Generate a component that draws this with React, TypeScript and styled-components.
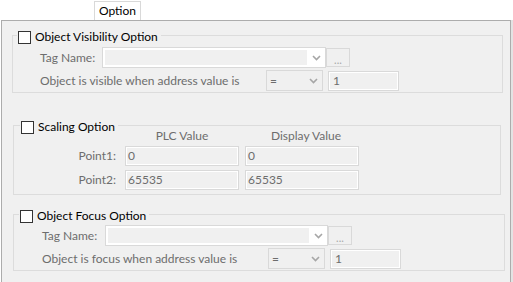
import React from 'react'
import styled, { createGlobalStyle } from 'styled-components'

const GlobalStyle = createGlobalStyle`
  html, body {
    margin: 0;
    padding: 0;
    background: #ffffff;
  }
  body {
    font-family: Lato, Roboto, "Liberation Sans", Arial, sans-serif;
    font-size: 12px;
    color: #000000;
  }
`

const Screen = styled.div`
  width: 513px;
  height: 282px;
  overflow: hidden;
  box-sizing: border-box;
  padding-left: 1px;
  background: #ffffff;
`

const TabStrip = styled.div`
  height: 20px;
  display: flex;
  align-items: flex-end;
  padding-left: 93px;
`

const Tab = styled.div`
  width: 47px;
  height: 19px;
  box-sizing: border-box;
  border: 1px solid #d9d9d9;
  border-bottom: none;
  background: #ffffff;
  display: flex;
  align-items: center;
  justify-content: center;
  line-height: 16px;
`

const Panel = styled.div`
  width: 510px;
  height: 262px;
  box-sizing: border-box;
  border: 1px solid #acacac;
  border-bottom: none;
  background: #f0f0f0;
  box-shadow: 2px 0 0 #e3e3e3;
  display: flow-root;
`

const Group = styled.fieldset<{ $left: number; $width: number; $top: number }>`
  margin: ${({ $top }) => $top}px 0 0 ${({ $left }) => $left}px;
  width: ${({ $width }) => $width}px;
  box-sizing: border-box;
  min-width: 0;
  padding: 0;
  border: 1px solid #dcdcdc;
`

const Legend = styled.legend<{ $offset: number }>`
  margin-left: ${({ $offset }) => $offset}px;
  padding: 4px 3px 0 1px;
  height: 20px;
  box-sizing: border-box;
`

const LegendInner = styled.span`
  display: inline-flex;
  align-items: center;
  gap: 4px;
  height: 16px;
  line-height: 16px;
  color: #000000;
  vertical-align: top;
`

const CheckBox = styled.span`
  width: 13px;
  height: 13px;
  box-sizing: border-box;
  border: 1px solid #333333;
  background: #ffffff;
`

const FieldRow = styled.div<{ $top: number; $indent: number }>`
  display: flex;
  align-items: center;
  margin-top: ${({ $top }) => $top}px;
  padding-left: ${({ $indent }) => $indent}px;
  height: 21px;
`

const Label = styled.span<{ $width: number }>`
  width: ${({ $width }) => $width}px;
  flex: none;
  color: #6d6d6d;
  white-space: nowrap;
`

const TagCombo = styled.div<{ $width: number }>`
  width: ${({ $width }) => $width}px;
  height: 21px;
  box-sizing: border-box;
  border: 1px solid #d9d9d9;
  background: #ffffff;
  padding: 2px 0 2px 2px;
  display: flex;
`

const TagEdit = styled.div`
  flex: 1;
  background: #f0f0f0;
`

const Arrow = styled.span`
  width: 18px;
  flex: none;
  display: flex;
  align-items: center;
  justify-content: center;
`

const ValueCombo = styled.div`
  width: 57px;
  height: 21px;
  box-sizing: border-box;
  border: 1px solid #d9d9d9;
  background: #f0f0f0;
  display: flex;
  align-items: center;
  padding-left: 3px;
  color: #6d6d6d;
`

const ComboText = styled.span`
  flex: 1;
`

const BrowseButton = styled.div`
  width: 24px;
  height: 19px;
  box-sizing: border-box;
  border: 1px solid #d9d9d9;
  background: #f0f0f0;
  color: #a8a8a8;
  font-size: 11px;
  display: flex;
  align-items: center;
  justify-content: center;
  padding-top: 3px;
`

const TextBox = styled.div<{ $width?: number; $pad: number; $gap?: number }>`
  width: ${({ $width }) => ($width ? `${$width}px` : 'auto')};
  height: 20px;
  margin-left: ${({ $gap }) => $gap ?? 0}px;
  box-sizing: border-box;
  border: 1px solid #d9d9d9;
  box-shadow: inset 0 0 0 1px #ffffff;
  background: #f0f0f0;
  color: #6d6d6d;
  line-height: 18px;
  padding-left: ${({ $pad }) => $pad}px;
`

const ScaleGrid = styled.div`
  display: grid;
  grid-template-columns: 105px 114px 114px;
  grid-template-rows: 13px 20px 20px;
  column-gap: 6px;
  row-gap: 4px;
  margin-top: -6px;
  padding-bottom: 4px;
`

const ColumnHead = styled.span<{ $shift: number }>`
  color: #6d6d6d;
  text-align: center;
  line-height: 13px;
  padding-left: ${({ $shift }) => $shift}px;
`

const PointLabel = styled.span`
  color: #6d6d6d;
  text-align: right;
  padding-right: 3px;
  line-height: 20px;
`

function Chevron() {
  return (
    <svg width="9" height="6" viewBox="0 0 9 6">
      <polyline points="1,1 4.5,4.5 8,1" fill="none" stroke="#a6a6a6" strokeWidth="1.6" />
    </svg>
  )
}

type OptionProps = {
  title: string
  condition: string
  left: number
  width: number
  top: number
  offset: number
  indent: number
  tagLabel: number
  combo: number
  firstTop: number
}

function AddressOption(p: OptionProps) {
  return (
    <Group $left={p.left} $width={p.width} $top={p.top}>
      <Legend $offset={p.offset}>
        <LegendInner>
          <CheckBox />
          {p.title}
        </LegendInner>
      </Legend>
      <FieldRow $top={p.firstTop} $indent={p.indent}>
        <Label $width={p.tagLabel}>Tag Name:</Label>
        <TagCombo $width={p.combo}>
          <TagEdit />
          <Arrow><Chevron /></Arrow>
        </TagCombo>
        <BrowseButton>...</BrowseButton>
      </FieldRow>
      <FieldRow $top={2} $indent={p.indent}>
        <Label $width={226}>{p.condition}</Label>
        <ValueCombo>
          <ComboText>=</ComboText>
          <Arrow><Chevron /></Arrow>
        </ValueCombo>
        <TextBox $width={71} $pad={4} $gap={5}>1</TextBox>
      </FieldRow>
      <div style={{ height: 1 }} />
    </Group>
  )
}

export default function App() {
  return (
    <Screen>
      <GlobalStyle />
      <TabStrip>
        <Tab>Option</Tab>
      </TabStrip>
      <Panel>
        <AddressOption
          title="Object Visibility Option"
          condition="Object is visible when address value is"
          left={10}
          width={491}
          top={4}
          offset={4}
          indent={27}
          tagLabel={62}
          combo={224}
          firstTop={2}
        />
        <Group $left={11} $width={488} $top={22}>
          <Legend $offset={6}>
            <LegendInner>
              <CheckBox />
              Scaling Option
            </LegendInner>
          </Legend>
          <ScaleGrid>
            <span />
            <ColumnHead $shift={0}>PLC Value</ColumnHead>
            <ColumnHead $shift={8}>Display Value</ColumnHead>
            <PointLabel>Point1:</PointLabel>
            <TextBox $pad={2}>0</TextBox>
            <TextBox $pad={2}>0</TextBox>
            <PointLabel>Point2:</PointLabel>
            <TextBox $pad={2}>65535</TextBox>
            <TextBox $pad={2}>65535</TextBox>
          </ScaleGrid>
        </Group>
        <AddressOption
          title="Object Focus Option"
          condition="Object is focus when address value is"
          left={11}
          width={492}
          top={9}
          offset={5}
          indent={28}
          tagLabel={63}
          combo={223}
          firstTop={1}
        />
      </Panel>
    </Screen>
  )
}
